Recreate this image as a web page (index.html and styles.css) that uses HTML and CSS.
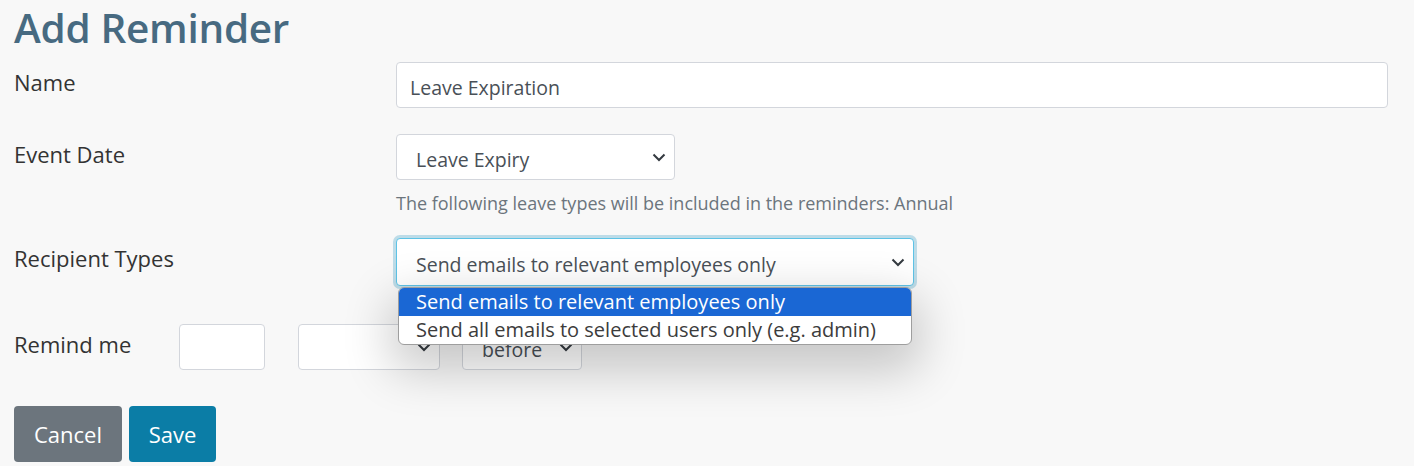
FILE: index.html
```html
<!DOCTYPE html>
<html lang="en">
<head>
<meta charset="utf-8">
<title>Add Reminder</title>
<link rel="stylesheet" href="styles.css">
</head>
<body>
<h1 class="title">Add Reminder</h1>
<form class="form">
  <div class="row row-name">
    <label class="label">Name</label>
    <div class="control">
      <div class="input input-wide"><span class="val">Leave Expiration</span></div>
    </div>
  </div>
  <div class="row row-date">
    <label class="label">Event Date</label>
    <div class="control">
      <div class="select select-date"><span class="val">Leave Expiry</span><svg class="chev" width="14" height="9" viewBox="0 0 14 9"><path d="M1.5 1.5 L7 7 L12.5 1.5" fill="none" stroke="#343a40" stroke-width="2"/></svg></div>
      <p class="help">The following leave types will be included in the reminders: Annual</p>
    </div>
  </div>
  <div class="row row-recipient">
    <label class="label">Recipient Types</label>
    <div class="control">
      <div class="dropwrap">
        <div class="select select-recipient focus"><span class="val">Send emails to relevant employees only</span><svg class="chev" width="14" height="9" viewBox="0 0 14 9"><path d="M1.5 1.5 L7 7 L12.5 1.5" fill="none" stroke="#343a40" stroke-width="2"/></svg></div>
        <ul class="menu">
          <li class="opt active">Send emails to relevant employees only</li>
          <li class="opt">Send all emails to selected users only (e.g. admin)</li>
        </ul>
      </div>
    </div>
  </div>
  <div class="remind">
    <label class="label remind-label">Remind me</label>
    <div class="input input-num"></div>
    <div class="select select-unit"><span class="val"></span><svg class="chev" width="14" height="9" viewBox="0 0 14 9"><path d="M1.5 1.5 L7 7 L12.5 1.5" fill="none" stroke="#343a40" stroke-width="2"/></svg></div>
    <div class="select select-when"><span class="val">before</span><svg class="chev" width="14" height="9" viewBox="0 0 14 9"><path d="M1.5 1.5 L7 7 L12.5 1.5" fill="none" stroke="#343a40" stroke-width="2"/></svg></div>
  </div>
  <div class="actions">
    <button type="button" class="btn btn-cancel">Cancel</button>
    <button type="button" class="btn btn-save">Save</button>
  </div>
</form>
</body>
</html>
```
FILE: styles.css
```css
html, body {
  margin: 0;
  padding: 0;
  background: #f8f8f8;
}
body {
  padding: 0 26px 0 14px;
  font-family: "Open Sans", "Noto Sans", sans-serif;
  color: #333;
  font-size: 19.5px;
}
.title {
  margin: 0;
  height: 62px;
  font-size: 40.5px;
  font-weight: 600;
  color: #476a81;
  line-height: 56px;
  letter-spacing: -0.3px;
}
.form {
  display: flex;
  flex-direction: column;
}
.row {
  display: grid;
  grid-template-columns: 382px 1fr;
  align-items: start;
}
.label {
  display: block;
  padding-top: 5px;
  line-height: 30px;
  font-size: 22px;
  color: #333;
}
.row-name { margin-bottom: 26px; }
.row-date { margin-bottom: 24px; }
.row-recipient { margin-bottom: 37px; height: 48px; }
.input, .select {
  box-sizing: border-box;
  height: 46px;
  background: #fff;
  border: 1px solid #d3d6dc;
  border-radius: 4px;
  display: flex;
  align-items: center;
  color: #495057;
}
.val {
  padding-top: 5px;
}
.input-wide {
  padding-left: 13px;
}
.select {
  justify-content: space-between;
  padding: 0 8px 0 19px;
}
.chev { flex: none; }
.select-date { width: 279px; }
.help {
  margin: 12px 0 0;
  font-size: 18px;
  line-height: 22px;
  color: #6c757d;
}
.dropwrap {
  position: relative;
  width: 518px;
}
.select-recipient {
  height: 48px;
  border-color: #5ec3e6;
  box-shadow: 0 0 0 3px rgba(140, 196, 218, 0.55);
}
.menu {
  position: absolute;
  left: 2px;
  right: 2px;
  top: 49px;
  margin: 0;
  padding: 0;
  list-style: none;
  background: #fff;
  border: 1px solid #9e9e9e;
  border-radius: 6px;
  overflow: hidden;
  box-shadow: 0 18px 48px 8px rgba(0, 0, 0, 0.2);
  z-index: 5;
}
.opt {
  height: 28px;
  line-height: 28px;
  padding-left: 17px;
  font-size: 20px;
  color: #3c3c3c;
  white-space: nowrap;
}
.opt.active {
  background: #1a67d4;
  color: #fff;
}
.remind {
  display: flex;
  align-items: flex-start;
  margin-bottom: 36px;
  padding-top: 1px;
}
.remind-label {
  width: 165px;
}
.input-num { width: 86px; margin-right: 33px; }
.select-unit { width: 142px; margin-right: 22px; }
.select-when { width: 120px; padding-left: 19px; }
.actions {
  display: flex;
  gap: 7px;
}
.btn {
  height: 56px;
  border: none;
  border-radius: 4px;
  color: #fff;
  font-family: "Open Sans", "Noto Sans", sans-serif;
  font-size: 22px;
  padding: 0;
  cursor: pointer;
}
.btn-cancel { background: #6c757d; width: 108px; }
.btn-save { background: #0b7da6; width: 87px; }
```
